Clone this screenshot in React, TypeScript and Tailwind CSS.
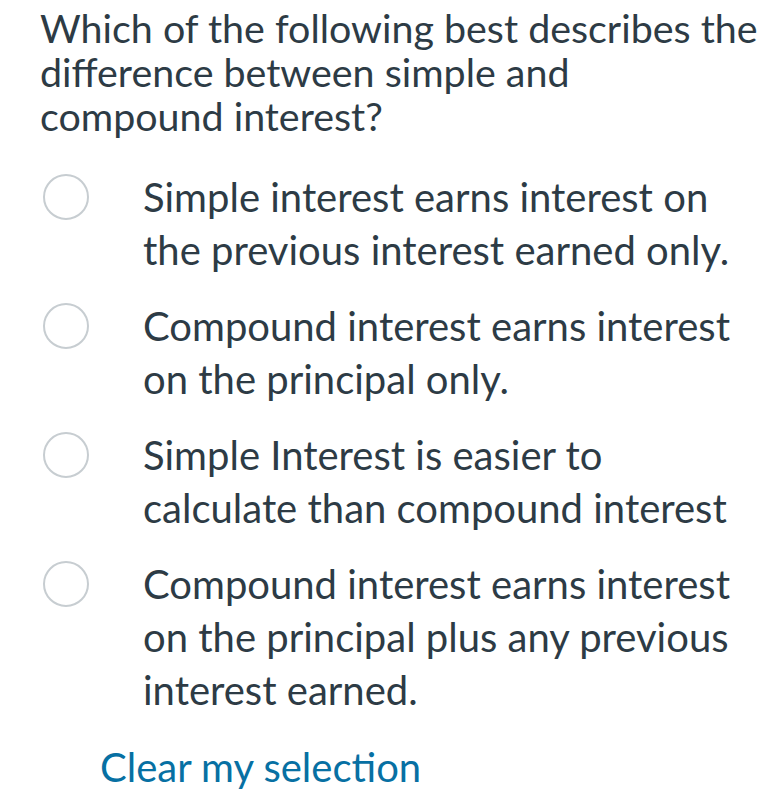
const options = [
  "Simple interest earns interest on the previous interest earned only.",
  "Compound interest earns interest on the principal only.",
  "Simple Interest is easier to calculate than compound interest",
  "Compound interest earns interest on the principal plus any previous interest earned.",
];

function Radio() {
  return (
    <span className="mt-[3px] block h-[46px] w-[46px] shrink-0 rounded-full border-2 border-[#c7cdd1] bg-white" />
  );
}

export default function App() {
  return (
    <div
      className="min-h-[797px] w-[771px] bg-white text-[#2d3b45]"
      style={{ fontFamily: "Lato, 'Open Sans', sans-serif" }}
    >
      <h1 className="pl-[40px] pr-[12px] pt-[6px] text-[39.4px] leading-[44px] font-normal">
        Which of the following best describes the difference between simple and
        compound interest?
      </h1>

      <div className="mt-[33px] flex flex-col gap-[23px] pl-[43px] pr-[24px]">
        {options.map((text) => (
          <label key={text} className="flex items-start gap-[54px]">
            <Radio />
            <span className="text-[40px] leading-[53px]">{text}</span>
          </label>
        ))}
      </div>

      <div className="mt-[28px] pl-[100px]">
        <button className="text-[40px] leading-[44px] text-[#0770a3]">
          Clear my selection
        </button>
      </div>
    </div>
  );
}
